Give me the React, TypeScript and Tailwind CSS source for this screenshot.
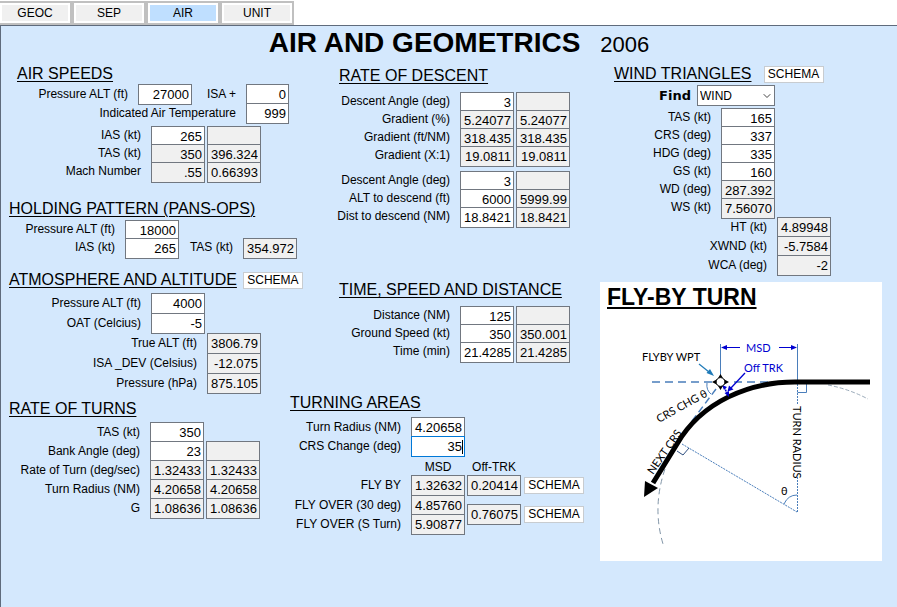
import React, { useId } from 'react';
import { ChevronDown } from 'lucide-react';
import clsx from 'clsx';

interface Cell {
  value: string;
  readOnly?: boolean;
  active?: boolean;
}

interface RowProps {
  label: string;
  cells: Cell[];
  labelWidth: string;
  height?: string;
}

const input = (value: string): Cell => ({ value });
const output = (value: string): Cell => ({ value, readOnly: true });

function Field({ id, label, cell, width = 'w-[54px]' }: { id?: string; label?: string; cell: Cell; width?: string }) {
  return (
    <span className={clsx('relative block h-[21px] shrink-0', width)}>
      <input
        id={id}
        aria-label={label}
        type="text"
        defaultValue={cell.value}
        readOnly={cell.readOnly}
        className={clsx(
          'block h-full w-full border pr-[2px] text-right font-[Liberation_Sans,sans-serif] text-[13px] text-black outline-none focus:border-[#0078d7]',
          cell.readOnly ? 'bg-[#f0f0f0]' : 'bg-white',
          cell.active ? 'border-[#0078d7]' : 'border-[#717780]'
        )}
      />
      {cell.active && <span className="absolute top-1 right-[2px] h-[14px] w-px bg-black" />}
    </span>
  );
}

function Row({ label, cells, labelWidth, height = 'h-[18px]' }: RowProps) {
  const id = useId();
  return (
    <div className={clsx('flex items-stretch', height)}>
      <label htmlFor={id} className={clsx('flex shrink-0 items-center justify-end whitespace-nowrap', labelWidth)}>
        {label}
      </label>
      <div className="ml-[10px] flex gap-[2px]">
        {cells.map((cell, index) => (
          <Field
            key={index}
            id={index === 0 ? id : undefined}
            label={index === 0 ? undefined : `${label} result`}
            cell={cell}
          />
        ))}
      </div>
    </div>
  );
}

function Heading({ children }: { children: React.ReactNode }) {
  return (
    <h2 className="text-[16px] leading-[20px] whitespace-nowrap underline decoration-1 underline-offset-2">{children}</h2>
  );
}

function SchemaButton() {
  return (
    <button type="button" className="h-[17px] w-[60px] shrink-0 border border-[#c8ccd0] bg-white text-[12px] leading-[15px]">
      SCHEMA
    </button>
  );
}

function Tabs() {
  const tabs = ['GEOC', 'SEP', 'AIR', 'UNIT'];
  return (
    <nav className="-ml-[2px] flex h-[25px] pt-[1px]">
      {tabs.map((tab) => (
        <button
          key={tab}
          type="button"
          className="w-[74px] border-2 border-[#c0c0c0] bg-white p-[2px] text-[12px] leading-[16px]"
        >
          <span className={clsx('block h-full', tab === 'AIR' ? 'bg-[#bfdfff]' : 'bg-[#f0f0f0]')}>{tab}</span>
        </button>
      ))}
    </nav>
  );
}

function AirSpeeds() {
  return (
    <section>
      <div className="pl-2">
        <Heading>AIR SPEEDS</Heading>
      </div>
      <div className="flex h-[19px]">
        <label htmlFor="speed-alt" className="flex w-[119px] items-center justify-end">
          Pressure ALT (ft)
        </label>
        <div className="ml-[10px]">
          <Field id="speed-alt" cell={input('27000')} />
        </div>
        <label htmlFor="isa" className="flex w-[44px] items-center justify-end">
          ISA +
        </label>
        <div className="ml-[10px]">
          <Field id="isa" cell={input('0')} width="w-[43px]" />
        </div>
      </div>
      <div className="flex h-[19px]">
        <label htmlFor="iat" className="flex w-[227px] items-center justify-end">
          Indicated Air Temperature
        </label>
        <div className="ml-[10px]">
          <Field id="iat" cell={input('999')} width="w-[43px]" />
        </div>
      </div>
      <div className="mt-1">
        <Row labelWidth="w-[132px]" label="IAS (kt)" cells={[input('265'), output('')]} />
        <Row labelWidth="w-[132px]" label="TAS (kt)" cells={[output('350'), output('396.324')]} />
        <Row labelWidth="w-[132px]" label="Mach Number" cells={[output('.55'), output('0.66393')]} />
      </div>
    </section>
  );
}

function HoldingPattern() {
  return (
    <section className="mt-[19px]">
      <Heading>HOLDING PATTERN (PANS-OPS)</Heading>
      <div className="mt-[1px] flex items-end">
        <div>
          <Row labelWidth="w-[106px]" label="Pressure ALT (ft)" cells={[input('18000')]} />
          <Row labelWidth="w-[106px]" label="IAS (kt)" cells={[input('265')]} />
        </div>
        <Row labelWidth="w-[54px]" label="TAS (kt)" cells={[output('354.972')]} />
      </div>
    </section>
  );
}

function Atmosphere() {
  return (
    <section className="mt-[14px]">
      <div className="flex items-center gap-[6px]">
        <Heading>ATMOSPHERE AND ALTITUDE</Heading>
        <SchemaButton />
      </div>
      <div className="mt-[3px]">
        <Row height="h-5" labelWidth="w-[132px]" label="Pressure ALT (ft)" cells={[input('4000')]} />
        <Row height="h-5" labelWidth="w-[132px]" label="OAT (Celcius)" cells={[input('-5')]} />
        <Row height="h-5" labelWidth="w-[188px]" label="True ALT (ft)" cells={[output('3806.79')]} />
        <Row height="h-5" labelWidth="w-[188px]" label="ISA _DEV (Celsius)" cells={[output('-12.075')]} />
        <Row height="h-5" labelWidth="w-[188px]" label="Pressure (hPa)" cells={[output('875.105')]} />
      </div>
    </section>
  );
}

function RateOfTurns() {
  return (
    <section className="mt-[6px]">
      <Heading>RATE OF TURNS</Heading>
      <div className="mt-[3px]">
        <Row height="h-[19px]" labelWidth="w-[131px]" label="TAS (kt)" cells={[input('350')]} />
        <Row height="h-[19px]" labelWidth="w-[131px]" label="Bank Angle (deg)" cells={[input('23'), output('')]} />
        <Row height="h-[19px]" labelWidth="w-[131px]" label="Rate of Turn (deg/sec)" cells={[output('1.32433'), output('1.32433')]} />
        <Row height="h-[19px]" labelWidth="w-[131px]" label="Turn Radius (NM)" cells={[output('4.20658'), output('4.20658')]} />
        <Row height="h-[19px]" labelWidth="w-[131px]" label="G" cells={[output('1.08636'), output('1.08636')]} />
      </div>
    </section>
  );
}

function RateOfDescent() {
  return (
    <section className="mt-[2px]">
      <Heading>RATE OF DESCENT</Heading>
      <div className="mt-[6px]">
        <Row labelWidth="w-[111px]" label="Descent Angle (deg)" cells={[input('3'), output('')]} />
        <Row labelWidth="w-[111px]" label="Gradient (%)" cells={[output('5.24077'), output('5.24077')]} />
        <Row labelWidth="w-[111px]" label="Gradient (ft/NM)" cells={[output('318.435'), output('318.435')]} />
        <Row labelWidth="w-[111px]" label="Gradient (X:1)" cells={[output('19.0811'), output('19.0811')]} />
      </div>
      <div className="mt-[7px]">
        <Row labelWidth="w-[111px]" label="Descent Angle (deg)" cells={[input('3'), output('')]} />
        <Row labelWidth="w-[111px]" label="ALT to descend (ft)" cells={[input('6000'), output('5999.99')]} />
        <Row labelWidth="w-[111px]" label="Dist to descend (NM)" cells={[input('18.8421'), output('18.8421')]} />
      </div>
    </section>
  );
}

function TimeSpeedDistance() {
  return (
    <section className="mt-[55px]">
      <Heading>TIME, SPEED AND DISTANCE</Heading>
      <div className="mt-[6px]">
        <Row labelWidth="w-[111px]" label="Distance (NM)" cells={[input('125'), output('')]} />
        <Row labelWidth="w-[111px]" label="Ground Speed (kt)" cells={[input('350'), output('350.001')]} />
        <Row labelWidth="w-[111px]" label="Time (min)" cells={[input('21.4285'), output('21.4285')]} />
      </div>
    </section>
  );
}

function TurningAreas() {
  return (
    <section className="mt-[33px] -ml-[49px]">
      <Heading>TURNING AREAS</Heading>
      <div className="mt-[4px]">
        <Row height="h-[19px]" labelWidth="w-[111px]" label="Turn Radius (NM)" cells={[input('4.20658')]} />
        <Row height="h-[19px]" labelWidth="w-[111px]" label="CRS Change (deg)" cells={[{ value: '35', active: true }]} />
      </div>
      <div className="mt-[4px] ml-[121px] flex h-4 gap-[2px] text-center">
        <span className="w-[54px]">MSD</span>
        <span className="w-[54px]">Off-TRK</span>
      </div>
      <div className="flex">
        <div>
          <Row height="h-[20px]" labelWidth="w-[111px]" label="FLY BY" cells={[output('1.32632')]} />
          <Row height="h-[19px]" labelWidth="w-[111px]" label="FLY OVER (30 deg)" cells={[output('4.85760')]} />
          <Row height="h-[19px]" labelWidth="w-[111px]" label="FLY OVER (S Turn)" cells={[output('5.90877')]} />
        </div>
        <div className="ml-[2px] flex flex-col gap-2">
          <div className="flex items-center gap-[3px]">
            <Field label="Fly by off track" cell={output('0.20414')} />
            <SchemaButton />
          </div>
          <div className="flex items-center gap-[3px]">
            <Field label="Fly over off track" cell={output('0.76075')} />
            <SchemaButton />
          </div>
        </div>
      </div>
    </section>
  );
}

function WindTriangles() {
  return (
    <section className="pl-[14px]">
      <div className="flex items-center gap-[12px]">
        <Heading>WIND TRIANGLES</Heading>
        <SchemaButton />
      </div>
      <div className="mt-[1px] flex h-[23px] items-start">
        <label htmlFor="find" className="w-[77px] text-right font-[DejaVu_Sans,sans-serif] text-[13px] leading-[22px] font-bold">
          Find
        </label>
        <div className="relative ml-[6px] w-[78px]">
          <select
            id="find"
            defaultValue="WIND"
            className="block h-[21px] w-full appearance-none border border-[#717780] bg-white pl-[2px] text-[12px] leading-[18px]"
          >
            <option>WIND</option>
            <option>TRACK</option>
            <option>HEADING</option>
          </select>
          <ChevronDown className="pointer-events-none absolute top-[5px] right-[2px] h-3 w-3 text-[#444]" strokeWidth={2} />
        </div>
      </div>
      <Row labelWidth="w-[97px]" label="TAS (kt)" cells={[input('165')]} />
      <Row labelWidth="w-[97px]" label="CRS (deg)" cells={[input('337')]} />
      <Row labelWidth="w-[97px]" label="HDG (deg)" cells={[input('335')]} />
      <Row labelWidth="w-[97px]" label="GS (kt)" cells={[input('160')]} />
      <Row labelWidth="w-[97px]" label="WD (deg)" cells={[output('287.392')]} />
      <Row labelWidth="w-[97px]" label="WS (kt)" cells={[output('7.56070')]} />
      <div className="mt-[1px]">
        <Row height="h-[19px]" labelWidth="w-[153px]" label="HT (kt)" cells={[output('4.89948')]} />
        <Row height="h-[19px]" labelWidth="w-[153px]" label="XWND (kt)" cells={[output('-5.7584')]} />
        <Row height="h-[19px]" labelWidth="w-[153px]" label="WCA (deg)" cells={[output('-2')]} />
      </div>
    </section>
  );
}

function FlyByTurn() {
  return (
    <section className="relative mt-[8px] w-[282px] bg-white">
      <h2 className="absolute top-[2px] left-[7px] text-[23px] leading-[26px] font-bold whitespace-nowrap underline decoration-2 underline-offset-2">
        FLY-BY TURN
      </h2>
      <svg viewBox="0 0 282 279" className="block w-full font-[Lato,sans-serif]" fill="none">
        {/* guide lines */}
        <g stroke="#4a7ebb">
          <path d="M52 100H112" strokeWidth="1.5" strokeDasharray="8 5" />
          <path d="M134 100H190" strokeWidth="1.5" strokeDasharray="8 5" />
          <path d="M116 107L92 139" strokeWidth="1.5" strokeDasharray="7 4" />
          <path d="M120.500 62V94M197.500 62V104" />
          <path d="M197.500 105V123M197.500 195V230" strokeDasharray="2 1" />
          <path d="M82 162L197 230" strokeDasharray="2 1" />
          <path d="M107 101Q106 108 111 112" />
          <path d="M184 222Q188 213 197 213" />
          <path d="M197.500 110.500H206.500V101" />
          <path d="M77 169L83 173L89 166" stroke="#2f4f80" />
        </g>
        <g stroke="#8296a8">
          <path d="M65 187Q52 225 63 262" strokeDasharray="6 4" />
          <path d="M228 103Q249 107 268 117" strokeDasharray="4 2" strokeWidth="0.8" />
        </g>

        {/* flight path */}
        <path d="M270 100H195C150 100 102 119 77 162L53 201" stroke="#000" strokeWidth="5" />
        <path d="M44 215L45 199L58 206Z" fill="#000" />

        {/* dimension arrows */}
        <g stroke="#0000d0" fill="#0000d0">
          <path d="M124 65.500H140M179 65.500H194" />
          <path d="M121 65.500L127 63V68ZM197 65.500L191 63V68Z" stroke="none" />
          <path d="M145 91L130 107" strokeWidth="1.300" />
          <path d="M127.500 109.500L129 103.500L133.500 107.500Z" stroke="none" />
          <path d="M124 105L128 113" strokeWidth="1.500" strokeDasharray="2 1" />
          <path d="M129 115L124.500 111L129 109Z" stroke="none" />
          <path d="M122 103L127 105L124 108Z" stroke="none" />
        </g>
        <path d="M99 82L109 90" stroke="#1f7ab8" strokeWidth="1.300" />
        <path d="M114 94L106.500 91L110 87Z" fill="#1f7ab8" />

        {/* waypoint */}
        <path d="M120.500 92L123.500 97L129 100L123.500 103L120.500 108L117.500 103L112 100L117.500 97Z" fill="#000" />
        <circle cx="120.500" cy="100" r="4.400" fill="#fff" stroke="#000" strokeWidth="1" />

        <g fill="#000" fontSize="11">
          <text x="42" y="79">FLYBY WPT</text>
          <text x="146" y="70" fill="#0000d0">MSD</text>
          <text x="144" y="90" fill="#0000d0">Off TRK</text>
          <text transform="translate(59 141) rotate(-29)">CRS CHG θ</text>
          <text transform="translate(53 193) rotate(-55)">NEXT CRS</text>
          <text transform="translate(193 124) rotate(90)">TURN RADIUS</text>
          <text x="181" y="213">θ</text>
        </g>
      </svg>
    </section>
  );
}

export default function App() {
  return (
    <div className="flex min-h-screen flex-col bg-white font-[Liberation_Sans,sans-serif] text-[12px] leading-4 text-black">
      <Tabs />
      <main className="flex-1 border-t border-l border-[#5f6b7c] bg-[#d4e8fd]">
        <header className="flex items-baseline justify-center gap-5 pl-5">
          <h1 className="text-[28px] leading-[34px] font-bold whitespace-nowrap">AIR AND GEOMETRICS</h1>
          <span className="text-[22px]">2006</span>
        </header>
        <div className="grid grid-cols-[330px_261px_1fr] pt-[4px] pl-2">
          <div>
            <AirSpeeds />
            <HoldingPattern />
            <Atmosphere />
            <RateOfTurns />
          </div>
          <div>
            <RateOfDescent />
            <TimeSpeedDistance />
            <TurningAreas />
          </div>
          <div>
            <WindTriangles />
            <FlyByTurn />
          </div>
        </div>
      </main>
    </div>
  );
}
